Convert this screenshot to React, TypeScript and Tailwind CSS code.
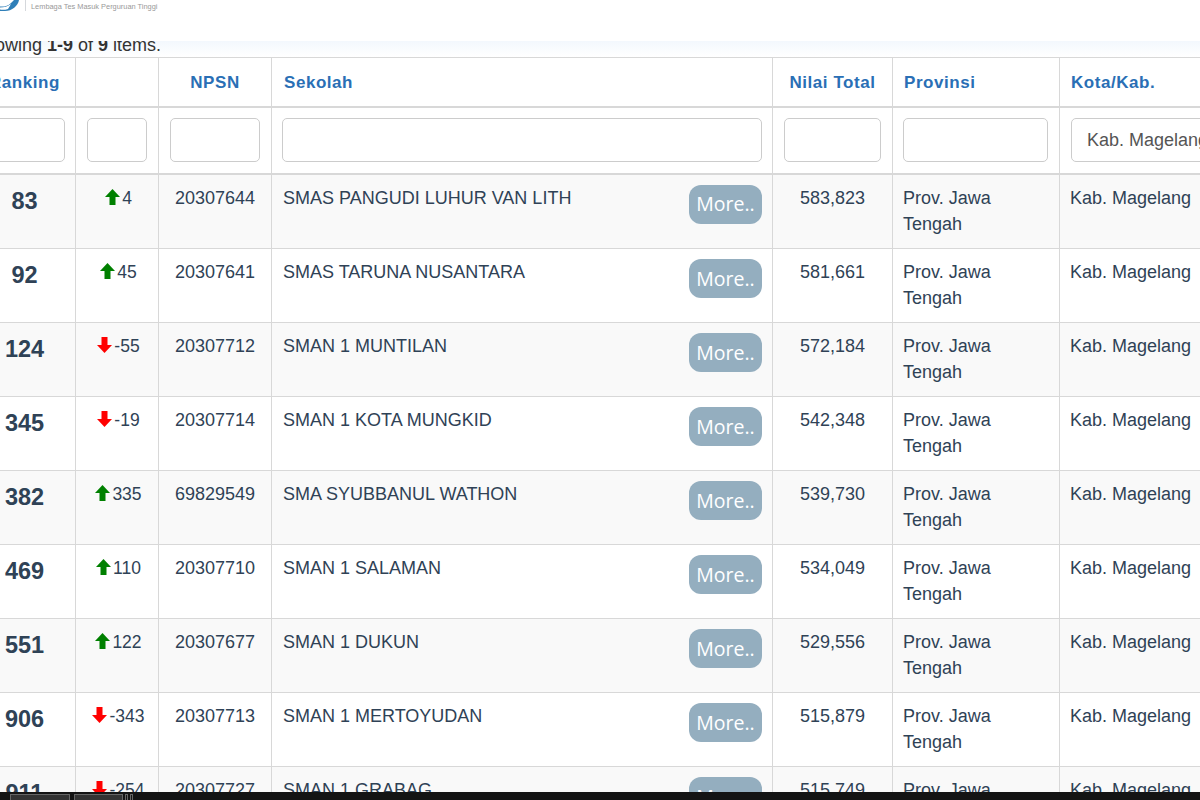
const rows: [string, number, string, string, string][] = [
  ["83", 4, "20307644", "SMAS PANGUDI LUHUR VAN LITH", "583,823"],
  ["92", 45, "20307641", "SMAS TARUNA NUSANTARA", "581,661"],
  ["124", -55, "20307712", "SMAN 1 MUNTILAN", "572,184"],
  ["345", -19, "20307714", "SMAN 1 KOTA MUNGKID", "542,348"],
  ["382", 335, "69829549", "SMA SYUBBANUL WATHON", "539,730"],
  ["469", 110, "20307710", "SMAN 1 SALAMAN", "534,049"],
  ["551", 122, "20307677", "SMAN 1 DUKUN", "529,556"],
  ["906", -343, "20307713", "SMAN 1 MERTOYUDAN", "515,879"],
  ["911", -254, "20307727", "SMAN 1 GRABAG", "515,749"],
];

function Arrow({ up }: { up: boolean }) {
  return (
    <svg width="15" height="16" viewBox="0 0 15 16" className="inline-block mr-[2px] -mt-[4px] align-middle">
      <path
        d={up ? "M7.5 0 15 8H10.5V16H4.5V8H0Z" : "M7.5 16 15 8H10.5V0H4.5V8H0Z"}
        fill={up ? "#008000" : "#ff0000"}
      />
    </svg>
  );
}

const th = "border border-[#d8d8d8] border-b-2 pt-[2px] h-[49px] font-bold text-[17px] text-[#2a6fb5] tracking-[0.55px]";
const filterTd = "border border-[#d8d8d8] border-b-2 py-0 h-[67px]";
const input = "block w-full h-[44px] rounded-[5px] border border-[#cccccc] bg-white px-[15px] text-[18px] text-[#555555] font-['Liberation_Sans',sans-serif] outline-none";
const td = "border border-[#d8d8d8] px-[11px] pt-[10px] align-top";
const filterPad = ["pl-[11px] pr-[10px]", "px-[11px]", "px-[11px]", "px-[10px]", "px-[11px]", "pl-[10px] pr-[11px]", "px-[11px]"];

export default function App() {
  return (
    <div className="relative h-[800px] w-[1200px] overflow-hidden bg-white font-['Liberation_Sans',Arial,sans-serif] text-[18px] leading-[26px] text-[#2f4256]">
      <header className="absolute inset-x-0 top-0 z-10 flex h-[41px] items-start bg-white">
        <svg width="20" height="11" viewBox="0 0 20 11" className="shrink-0">
          <path d="M0 6.5C4 7 8 6 11 3L14 0H19C18 6 12 11 5 11H0Z" fill="#2f7fb8" />
          <path d="M0 7.5C4 7.5 8 6.5 11 4L8 9C5 10 2 10 0 9.5Z" fill="#ffffff" />
        </svg>
        <div className="ml-[5px] h-[11px] w-px shrink-0 bg-[#d5d8dc]" />
        <span className="ml-[5px] whitespace-nowrap text-[7.4px] leading-[14px] text-[#999999]">
          Lembaga Tes Masuk Perguruan Tinggi
        </span>
      </header>

      <div className="h-[57px] overflow-hidden bg-gradient-to-b from-[#f3f8fd] from-[72%] to-white pt-[32px]">
        <div className="-ml-[27px] whitespace-nowrap text-[#333333]">
          Showing <b>1-9</b> of <b>9</b> items.
        </div>
      </div>

      <table className="-ml-[27px] w-[1359px] table-fixed border-collapse">
        <colgroup>
          <col className="w-[102px]" />
          <col className="w-[83px]" />
          <col className="w-[113px]" />
          <col className="w-[501px]" />
          <col className="w-[120px]" />
          <col className="w-[167px]" />
          <col className="w-[273px]" />
        </colgroup>
        <thead>
          <tr>
            <th className={th + " px-[11px] text-center"}>Ranking</th>
            <th className={th + " px-[11px]"}></th>
            <th className={th + " px-[11px] text-center"}>NPSN</th>
            <th className={th + " pl-[12px] pr-[11px] text-left"}>Sekolah</th>
            <th className={th + " px-[11px] text-center"}>Nilai Total</th>
            <th className={th + " px-[11px] text-left"}>Provinsi</th>
            <th className={th + " px-[11px] text-left"}>Kota/Kab.</th>
          </tr>
          <tr>
            {["", "", "", "", "", "", "Kab. Magelang"].map((v, i) => (
              <td key={i} className={filterTd + " " + filterPad[i]}>
                <input className={input} defaultValue={v} aria-label={"filter " + i} />
              </td>
            ))}
          </tr>
        </thead>
        <tbody>
          {rows.map(([rank, delta, npsn, name, total], i) => (
            <tr key={npsn} className={(i % 2 === 0 ? "bg-[#f9f9f9] " : "bg-white ") + (i === 0 ? "h-[75px]" : "h-[74px]")}>
              <td className={td + " text-center text-[23.5px] font-bold leading-[32px]"}>{rank}</td>
              <td className={td + " pl-[14px] text-center whitespace-nowrap text-[17.5px]"}>
                <Arrow up={delta > 0} />
                {delta}
              </td>
              <td className={td + " text-center"}>{npsn}</td>
              <td className={td + " pr-[10px]"}>
                <div className="flex items-start justify-between">
                  <span>{name}</span>
                  <button className="h-[39px] w-[73px] shrink-0 rounded-[12px] bg-[#94aebf] font-['Open_Sans',sans-serif] text-[19.5px] text-white">
                    More..
                  </button>
                </div>
              </td>
              <td className={td + " text-center"}>{total}</td>
              <td className={td + " pl-[10px]"}>
                Prov. Jawa
                <br />
                Tengah
              </td>
              <td className={td + " pl-[10px]"}>Kab. Magelang</td>
            </tr>
          ))}
        </tbody>
      </table>

      <footer className="absolute inset-x-0 bottom-0 z-10 flex h-[8px] items-end bg-[#141414] pl-[10px]">
        <div className="h-[6px] w-[60px] border border-b-0 border-[#666666] bg-[#333333]" />
        <div className="ml-[4px] h-[6px] w-[49px] border border-b-0 border-[#666666] bg-[#333333]" />
        <div className="ml-[2px] h-[6px] w-[3px] border border-b-0 border-[#666666]" />
        <div className="ml-[2px] h-[6px] w-[3px] border border-b-0 border-[#666666]" />
      </footer>
    </div>
  );
}
